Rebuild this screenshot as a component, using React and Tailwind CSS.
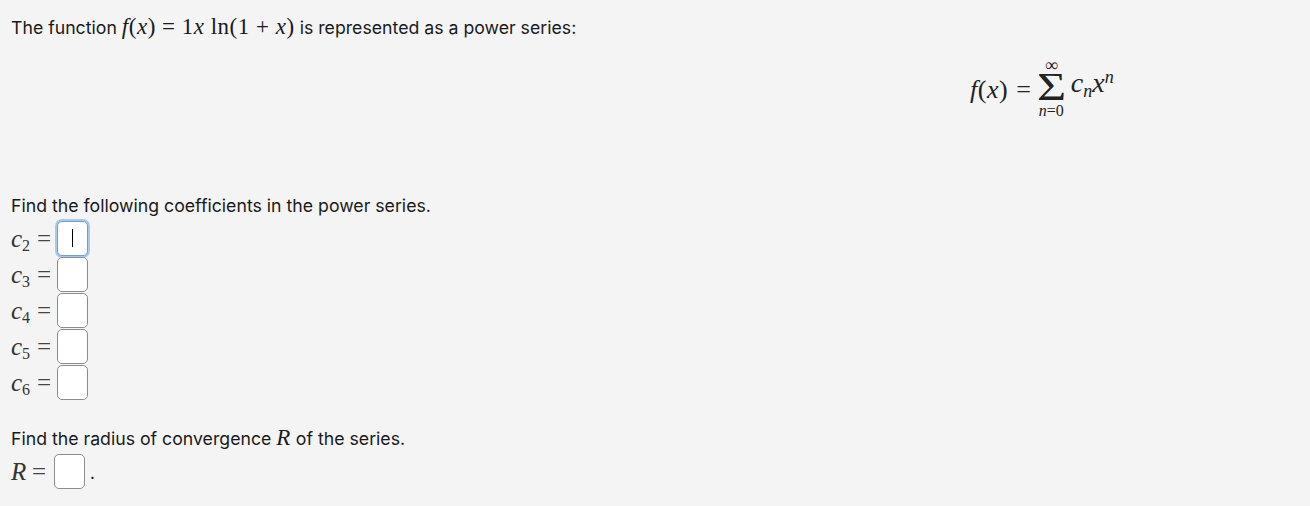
const serif = { fontFamily: '"Liberation Serif", "DejaVu Serif", serif' };

function M({ children }) {
  return (
    <span className="text-[23px] leading-none tracking-[0.5px]" style={serif}>
      {children}
    </span>
  );
}

function Box({ focused }) {
  return (
    <span
      className={
        "inline-flex items-center justify-center w-[31px] h-[35px] bg-white rounded-[5px] border " +
        (focused
          ? "border-[#6f9ed6] ring-[2px] ring-[#a9c8ec]"
          : "border-[#8c8c8c]")
      }
    >
      {focused && <span className="w-px h-[18px] bg-black" />}
    </span>
  );
}

function Coef({ n, focused }) {
  return (
    <div className="flex items-center h-[36px]">
      <span className="w-[25px] text-[25px] text-[#333] leading-none" style={serif}>
        <i>c</i>
        <sub className="text-[16px] not-italic">{n}</sub>
      </span>
      <span className="text-[25px] text-[#444] w-[21px] leading-none pl-[1px]" style={serif}>=</span>
      <Box focused={focused} />
    </div>
  );
}

export default function App() {
  return (
    <div
      className="w-[1310px] h-[506px] bg-[#f4f4f4] text-[#1a1a1a] px-[11px] pt-[15px] overflow-hidden"
      style={{ fontFamily: 'Inter, "Liberation Sans", sans-serif' }}
    >
      <p className="text-[17.7px] leading-[26px]">
        The function{" "}
        <M>
          <i>f</i>(<i>x</i>) = 1<i>x</i> ln(1 + <i>x</i>)
        </M>{" "}
        is represented as a power series:
      </p>

      <div className="pl-[959px] pt-[17px] h-[152px]" style={serif}>
        <div className="flex items-center text-[#222]">
          <span className="text-[26px] tracking-[0.5px]">
            <i>f</i>(<i>x</i>)
          </span>
          <span className="text-[26px] mx-[8px]">=</span>
          <span className="inline-flex flex-col items-center">
            <span className="text-[18px] leading-[14px]">∞</span>
            <span className="text-[40px] leading-[30px] scale-x-125">Σ</span>
            <span className="text-[16px] leading-[18px]">
              <i>n</i>=0
            </span>
          </span>
          <span className="text-[28px] ml-[7px] -mt-[12px]">
            <i>c</i>
            <sub className="text-[18px]">
              <i>n</i>
            </sub>
            <i>x</i>
            <sup className="text-[18px]">
              <i>n</i>
            </sup>
          </span>
        </div>
      </div>

      <p className="text-[17.7px] leading-[26px]">
        Find the following coefficients in the power series.
      </p>
      <div className="flex flex-col pt-[1px]">
        <Coef n={2} focused />
        <Coef n={3} />
        <Coef n={4} />
        <Coef n={5} />
        <Coef n={6} />
      </div>

      <p className="text-[17.7px] leading-[26px] mt-[26px]">
        Find the radius of convergence{" "}
        <M>
          <i>R</i>
        </M>{" "}
        of the series.
      </p>
      <div className="flex items-center h-[38px]">
        <span className="text-[25px] text-[#333] w-[21px] leading-none" style={serif}>
          <i>R</i>
        </span>
        <span className="text-[25px] text-[#444] w-[22px] leading-none" style={serif}>=</span>
        <Box />
        <span className="text-[17px] ml-[5px] mt-[6px]">.</span>
      </div>
    </div>
  );
}
